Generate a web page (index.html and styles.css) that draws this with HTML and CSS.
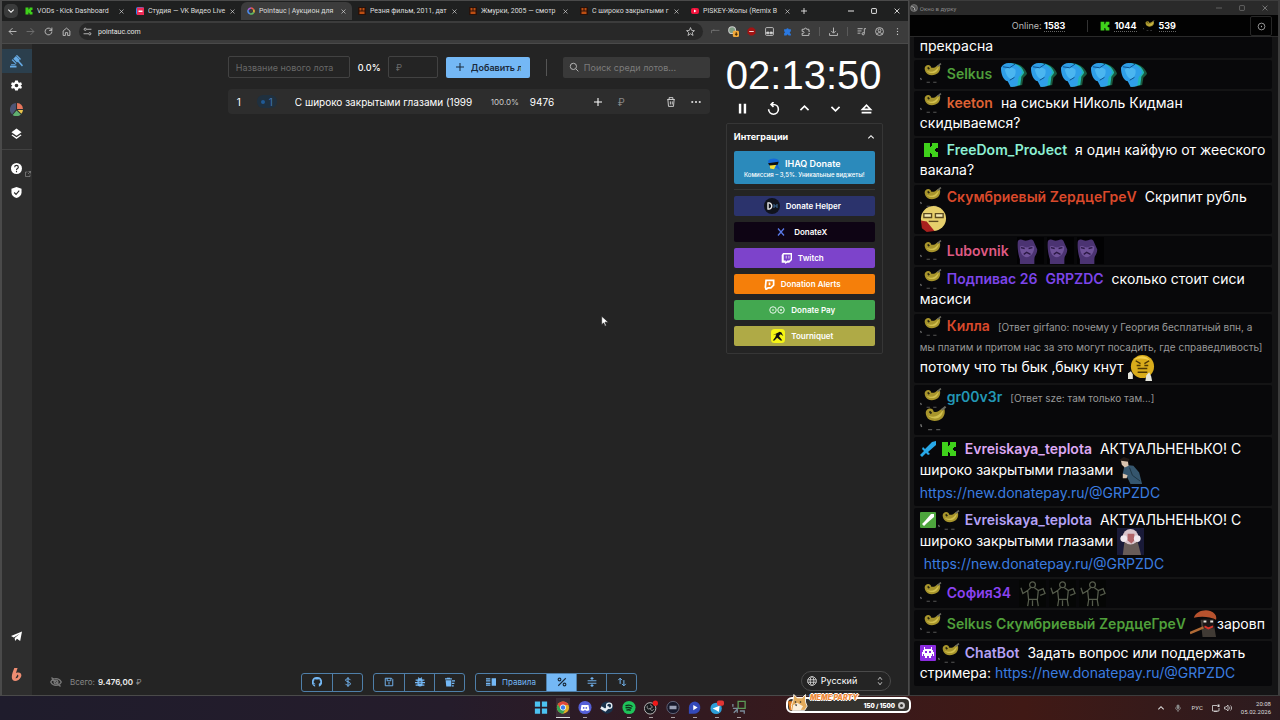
FILE: index.html
```
<!DOCTYPE html>
<html lang="ru">
<head>
    <meta charset="UTF-8">
    <meta name="viewport" content="width=device-width, initial-scale=1.0">
    <title>Pointauc | Аукцион для стримеров</title>
    <link rel="stylesheet" href="styles.css">
</head>
<body>

<!-- Общие иконки -->
<svg class="sprite" aria-hidden="true">
    <symbol id="kick" viewBox="0 0 16 16"><path fill="#3fd11b" d="M1 1h6v4h1V4h1V1h6v5h-2v1h-1v2h1v1h2v5H9v-3H8v-1H7v4H1z"/></symbol>
    <symbol id="banana" viewBox="0 0 20 20">
        <path fill="#a8952c" d="M5 3c2-2 5-1 5 1 2 1 4 0 6-2l2 0c1 3 0 7-4 8.500-4 1.500-8 0-9-2.500-1-2-1-4 0-5z"/>
        <path fill="#d2c04e" d="M6 7c4 2 8 1 11-4 0 4-3 7-7 6-2 0-3-1-4-2z"/>
        <path stroke="#2a2710" stroke-width="1.500" d="M7 4l1.500 1.500"/>
        <path stroke="#6b6b60" stroke-width="1.500" d="M16 3l3-2.500"/>
        <path stroke="#777" d="M.5 13.500l.7 2"/>
        <path stroke="#555" d="M6 17.500h3M12 17.500h3"/>
    </symbol>
    <symbol id="ice" viewBox="0 0 28 28">
        <path fill="#1b5a3f" d="M14 3c7 0 12 4 14 10-1 3-4 3-4 6l-1 6-9 2z"/>
        <path fill="#20b8b4" d="M10 2c8 0 13 4 15 10-1 3-3 3-3 6l-1 7-9 2z"/>
        <path fill="#2f9fe8" d="M1 7c2-5 8-6 13-4 5 1 8 5 9 9-1 3-4 4-4 7l-1 7-7 1-3-6c-5-1-7-8-7-14z"/>
        <path fill="#4bb6f0" d="M5 9c3-3 8-3 11 0 1 4-1 8-4 10-4-1-6-6-7-10z"/>
        <path fill="none" stroke="#0b4f8a" d="M3 6l7 1 6-4M10 20l5-3"/>
    </symbol>
    <symbol id="cat" viewBox="0 0 28 28">
        <path fill="#020203" d="M0 0h28v28H0z"/>
        <path fill="#4b3372" d="M1 4c3-3 6 0 8 0s6-3 8 0l4 9c0 5-3 6-3 10v5H3v-5C1 18 0 8 1 4z"/>
        <path fill="#6f5299" d="M3 10c3-2 5 1 7 1s5-3 8-1c0 6-4 11-8 11S3 16 3 10z"/>
        <path fill="none" stroke="#2c1945" stroke-width="1.500" d="M4 11l4 1M16 11l-4 1M7 18l3-2 4 2"/>
    </symbol>
    <symbol id="dance" viewBox="0 0 28 28">
        <path fill="#050605" d="M0 0h28v28H0z"/>
        <g fill="none" stroke="#565c4c" stroke-width="1.300"><circle cx="14" cy="5" r="3"/><path d="M12 8l-3 3-5 3-2-6M16 8l4 3 5-2 2 5-5 2M9 11l1 10-1 6M20 11l-1 10 1 6M10 20h9M14 21v6"/></g>
    </symbol>
    <symbol id="doubt" viewBox="0 0 28 28">
        <circle cx="14" cy="14" r="13" fill="#e6cf6c"/>
        <path fill="#f3e9b0" stroke="#5b4a20" stroke-width="1.400" d="M4 9h8v4H4zM16 9h8v4h-8z"/>
        <path fill="none" stroke="#5b4a20" stroke-width="1.400" d="M9 17h10"/>
        <path fill="#a8201e" d="M1 16l6 1 8 10-8 1-5-4z"/>
    </symbol>
    <symbol id="angry" viewBox="0 0 28 28">
        <circle cx="15" cy="13" r="12" fill="#d9ac1b"/>
        <path fill="#f1cf4c" d="M6 6c5-5 13-5 17 1-6-3-12-3-17-1z"/>
        <path fill="none" stroke="#4e3804" stroke-width="1.500" d="M8 7l5 3M22 7l-5 3M9 12h4M17 12h4M10 19h10M10 15h10"/>
        <path fill="#e6e6dc" d="M0 20l3-2 2 3v5H0zM19 22l3-3 2 4 1 5h-7z"/>
    </symbol>
    <symbol id="suit" viewBox="0 0 28 28">
        <path fill="#35566e" d="M8 8l9 1 6 7 3 12H14l-4-8-4-3z"/>
        <path fill="#d8c3ae" d="M4 3l7-1 1 7-4 2-3-3zM6 17l5 2-1 3H6z"/>
        <path fill="#221a16" d="M2 3l5-3 6 2-1 3-8-1z"/>
        <path fill="none" stroke="#1c3342" d="M13 11l3 8 8 6"/>
    </symbol>
    <symbol id="monkey" viewBox="0 0 28 28">
        <path fill="#191a38" d="M0 0h28v28H0z"/>
        <path fill="#685c58" d="M8 12l13 1 4 15H6z"/>
        <circle cx="14" cy="9" r="8" fill="#d9c4cb"/>
        <path fill="#b06468" d="M11 6h7v7l-3 3-4-3z"/>
        <circle cx="7" cy="11" r="3.500" fill="#f1e9ef"/><circle cx="21" cy="11" r="3.500" fill="#f1e9ef"/>
    </symbol>
    <symbol id="mushroom" viewBox="0 0 28 28">
        <path fill="#403a34" d="M11 10h13l3 18H13z"/>
        <path fill="#b7522e" d="M4 8C6 2 14-1 21 1c5 2 7 5 6 9-6-3-15-4-23-2z"/>
        <path fill="#1c1717" d="M13 9h12v10H14z"/>
        <path stroke="#e8e4dc" stroke-width="2" d="M14 12h3M21 12h3"/>
        <path fill="none" stroke="#d7342b" stroke-width="2" d="M15 17l4 2 5-2"/>
        <path stroke="#b06a35" stroke-width="2.500" d="M0 24l14-6"/>
    </symbol>
    <symbol id="film" viewBox="0 0 16 16"><path fill="#28120a" d="M0 0h16v16H0z"/><path fill="#bd4e12" d="M3 2h4v5H3zM9 2h4v5H9zM3 9h10v5H3z"/></symbol>
    <symbol id="x" viewBox="0 0 10 10"><path fill="none" stroke="currentColor" stroke-width="1.300" d="M1 1l8 8M9 1l-8 8"/></symbol>
    <symbol id="plus" viewBox="0 0 10 10"><path fill="none" stroke="currentColor" stroke-width="1.300" d="M5 0v10M0 5h10"/></symbol>
    <symbol id="up" viewBox="0 0 12 12"><path fill="none" stroke="currentColor" stroke-width="1.600" d="M2 8l4-4 4 4"/></symbol>
    <symbol id="down" viewBox="0 0 12 12"><path fill="none" stroke="currentColor" stroke-width="1.600" d="M2 4l4 4 4-4"/></symbol>
</svg>

<div class="windows">

    <!-- Окно браузера -->
    <section class="browser">
        <div class="tabs">
            <button class="tab-search" aria-label="Поиск вкладок"><svg class="i8"><use href="#down"/></svg></button>
            <div class="tab"><svg class="fav"><use href="#kick"/></svg><span>VODs - Kick Dashboard</span><svg class="close"><use href="#x"/></svg></div>
            <div class="tab"><svg class="fav" viewBox="0 0 16 16"><rect width="16" height="16" rx="4" fill="#2786f5"/><path fill="#ef2b56" d="M2 1h14v15H2z"/><path fill="#fff" d="M5 7h8v3H5z"/></svg><span>Студия — VK Видео Live</span><svg class="close"><use href="#x"/></svg></div>
            <div class="tab active"><svg class="fav" viewBox="0 0 16 16" fill="none" stroke-width="3"><path stroke="#ef5a4c" d="M8 2a6 6 0 0 1 5.200 3"/><path stroke="#f0c33a" d="M13.200 5a6 6 0 0 1 0 6"/><path stroke="#5dbb63" d="M13.200 11A6 6 0 0 1 6 13.600"/><path stroke="#4d8df0" d="M6 13.600A6 6 0 0 1 2.400 6"/><path stroke="#a95fd8" d="M2.400 6A6 6 0 0 1 8 2"/></svg><span>Pointauc | Аукцион для</span><svg class="close"><use href="#x"/></svg></div>
            <div class="tab"><svg class="fav"><use href="#film"/></svg><span>Резня фильм, 2011, дат</span><svg class="close"><use href="#x"/></svg></div>
            <div class="tab"><svg class="fav"><use href="#film"/></svg><span>Жмурки, 2005 — смотр</span><svg class="close"><use href="#x"/></svg></div>
            <div class="tab"><svg class="fav"><use href="#film"/></svg><span>С широко закрытыми г</span><svg class="close"><use href="#x"/></svg></div>
            <div class="tab"><svg class="fav" viewBox="0 0 16 16"><rect y="2" width="16" height="12" rx="4" fill="#f0133c"/><path fill="#fff" d="M6 5l5 3-5 3z"/></svg><span>PISKEY-Жопы (Remix B</span><svg class="close"><use href="#x"/></svg></div>
            <button class="new-tab" aria-label="Новая вкладка"><svg class="i6"><use href="#plus"/></svg></button>
            <div class="win-buttons">
                <svg class="i6" viewBox="0 0 10 10"><path stroke="currentColor" stroke-width="1.500" d="M0 5h10"/></svg>
                <svg class="i6" viewBox="0 0 10 10"><rect x="1" y="1" width="8" height="8" rx="1" fill="none" stroke="currentColor" stroke-width="1.500"/></svg>
                <svg class="i6"><use href="#x"/></svg>
            </div>
        </div>

        <div class="toolbar">
            <div class="nav">
                <svg viewBox="0 0 16 16"><path d="M15 8H2M8 2L2 8l6 6"/></svg>
                <svg class="off" viewBox="0 0 16 16"><path d="M1 8h13M8 2l6 6-6 6"/></svg>
                <svg viewBox="0 0 16 16"><path d="M14 8a6 6 0 1 1-2-4.500L14 6M14 1v5H9"/></svg>
                <svg viewBox="0 0 16 16"><path d="M2 7l6-5 6 5v8h-4v-5H6v5H2z"/></svg>
            </div>
            <div class="address">
                <svg class="site" viewBox="0 0 16 16"><circle cx="4" cy="4" r="2"/><path d="M7 4h8M1 12h8"/><circle cx="12" cy="12" r="2"/></svg>
                <input type="text" aria-label="Адрес" value="pointauc.com">
                <svg class="star" viewBox="0 0 16 16"><path d="M8 1l2 5 5 .5-4 3.500 1.500 5L8 12l-4.500 3L5 10 1 6.500 6 6z"/></svg>
            </div>
            <div class="ext">
                <svg class="off" viewBox="0 0 16 16"><path d="M1 6h14M1 6v5M5 4v3"/></svg>
                <svg class="big" viewBox="0 0 16 16"><circle cx="6" cy="6" r="5" fill="#7f9c83"/><rect x="7" y="7" width="9" height="9" rx="2" fill="#f2a93a" stroke="none"/><path stroke="#402800" d="M12 9v5M10 12h4"/></svg>
                <svg viewBox="0 0 16 16"><path fill="#a11313" stroke="none" d="M5 1h6l4 4v6l-4 4H5l-4-4V5z"/><path stroke="#fff" d="M4 8h8"/></svg>
                <svg viewBox="0 0 16 16"><rect x="1" y="1" width="14" height="14" rx="2"/><path fill="#ddd" d="M3 9h4v3H3zM9 9h4v3H9z"/></svg>
                <svg viewBox="0 0 16 16"><path fill="#2a78e0" stroke="none" d="M2 4h4a2 2 0 1 1 4 0h4v4a2 2 0 1 0 0 4v3h-4l-2-2-2 2H2v-4l2-2-2-1z"/></svg>
                <svg viewBox="0 0 16 16"><path d="M2 4h4a2 2 0 1 1 4 0h4v4a2 2 0 1 1 0 3v4H2v-4a2 2 0 1 0 0-3z"/></svg>
                <i></i>
                <svg viewBox="0 0 16 16"><path d="M8 1v9M4 7l4 4 4-4M1 11v4h14v-4"/></svg>
                <i></i>
                <svg viewBox="0 0 16 16"><path d="M1 3h9M1 7h7M1 11h5M13 3v8M13 3h3"/><circle cx="11" cy="12" r="2"/></svg>
                <svg viewBox="0 0 16 16"><circle cx="8" cy="8" r="7"/><circle cx="8" cy="6" r="2.500"/><path d="M3 13c2-4 8-4 10 0"/></svg>
                <svg viewBox="0 0 16 16"><path stroke-width="2" d="M8 2v2M8 7v2M8 12v2"/></svg>
            </div>
        </div>

        <div class="page">
            <nav class="sidebar">
                <a href="#" class="current" aria-label="Аукцион"><svg viewBox="0 0 24 24" fill="#67ace6"><path d="M0 20h12v3H0zM2 17h8v2H2z"/><path d="M11 1l2-1 7 7-1 2zM3 9l2-1 7 7-1 2zM6 7l5-5 7 7-5 5z"/><path d="M14 12l2-2 8 9-2 2z"/></svg></a>
                <a href="#" aria-label="Настройки"><svg viewBox="0 0 24 24" fill="#fff"><path fill-rule="evenodd" d="M9 1h6l1 4 2 1 4-1 2 5-3 2 3 3-2 4-4-1-2 1-1 4H9l-1-4-2-1-4 1-2-4 3-3-3-2 2-5 4 1 2-1zM12 8a4 4 0 1 0 0 8 4 4 0 0 0 0-8z"/></svg></a>
                <a href="#" aria-label="Колесо"><svg class="wide" viewBox="0 0 24 24"><path fill="#e8765c" d="M13 0a12 12 0 0 1 11 11H13z"/><path fill="#e8c34b" d="M14 13h10a12 12 0 0 1-3 7z"/><path fill="#5fae70" d="M12 14l8 7a12 12 0 0 1-15 1z"/><path fill="#4c5576" d="M11 0v12l-7 9A12 12 0 0 1 11 0z"/></svg></a>
                <a href="#" aria-label="Слои"><svg viewBox="0 0 24 24" fill="#fff"><path d="M12 1l11 8-11 8L1 9z"/><path d="M3 14l9 6 9-6 2 2-11 8L1 16z"/></svg></a>
                <hr>
                <a href="#" aria-label="Помощь"><svg viewBox="0 0 24 24"><circle cx="12" cy="12" r="12" fill="#fff"/><path fill="none" stroke="#2b2b2b" stroke-width="2.500" d="M8 9c0-5 8-5 8 0 0 3-4 3-4 6M12 17v3"/></svg>
                    <svg class="external" viewBox="0 0 12 12"><path fill="none" stroke="#aaa" d="M5 2H1v9h9V7M7 1h4v4M11 1L6 6"/></svg></a>
                <a href="#" aria-label="Политика"><svg viewBox="0 0 24 24"><path fill="#fff" d="M12 0l11 4v8c0 6-5 10-11 12C6 22 1 18 1 12V4z"/><path fill="none" stroke="#2b2b2b" stroke-width="2.500" d="M7 12l4 4 7-8"/></svg></a>
                <a href="#" class="bottom" aria-label="Telegram"><svg viewBox="0 0 24 24" fill="#fff"><path d="M0 11L24 1l-4 21-7-5-4 5-1-7L19 6 6 14z"/></svg></a>
                <a href="#" aria-label="Boosty"><svg class="wide" viewBox="0 0 24 24" fill="#ee8d72"><path fill-rule="evenodd" d="M8 0h6l-3 9c8-3 12 2 9 8-3 6-11 9-15 5-4-5 0-14 3-22zM14 12l-4 7c5 1 7-6 4-7z"/></svg></a>
            </nav>

            <main class="main">
                <div class="work">
                    <div class="lots">
                        <form class="new-lot">
                            <input class="lot-name" type="text" placeholder="Название нового лота" aria-label="Название нового лота">
                            <b>0.0%</b>
                            <input class="lot-sum" type="text" placeholder="₽" aria-label="Сумма">
                            <button type="button" class="add"><svg class="i8"><use href="#plus"/></svg><span>Добавить ло</span></button>
                            <i class="divider"></i>
                            <label class="search">
                                <svg viewBox="0 0 16 16"><circle cx="7" cy="7" r="5" fill="none" stroke="#bbb" stroke-width="1.500"/><path stroke="#bbb" stroke-width="1.500" d="M11 11l4 4"/></svg>
                                <input type="search" placeholder="Поиск среди лотов..." aria-label="Поиск среди лотов">
                            </label>
                        </form>
                        <div class="lot">
                            <span class="num">1</span>
                            <span class="badge"><i></i>1</span>
                            <span class="title">С широко закрытыми глазами (1999</span>
                            <span class="percent">100.0%</span>
                            <span class="sum">9476</span>
                            <svg class="i8"><use href="#plus"/></svg>
                            <span class="rub">₽</span>
                            <svg class="trash" viewBox="0 0 16 16" fill="none" stroke="#ddd" stroke-width="1.400"><path d="M2 4h12M5 4V1h6v3M3 4l1 11h8l1-11M7 7v5M10 7v5"/></svg>
                            <svg class="dots" viewBox="0 0 16 16" fill="#ddd"><circle cx="2" cy="8" r="1.700"/><circle cx="8" cy="8" r="1.700"/><circle cx="14" cy="8" r="1.700"/></svg>
                        </div>
                    </div>

                    <aside class="side">
                        <div class="timer">02:13:50</div>
                        <div class="controls">
                            <button aria-label="Пауза"><svg viewBox="0 0 16 16"><path stroke-width="3" d="M5 2v12M11 2v12"/></svg></button>
                            <button aria-label="Сбросить"><svg viewBox="0 0 16 16"><path d="M2 9a6 6 0 1 0 6-6H5M8 0L5 3l3 3"/></svg></button>
                            <button aria-label="Больше"><svg viewBox="0 0 16 16"><path d="M3 10l5-5 5 5"/></svg></button>
                            <button aria-label="Меньше"><svg viewBox="0 0 16 16"><path d="M3 6l5 5 5-5"/></svg></button>
                            <button aria-label="Максимум"><svg viewBox="0 0 16 16"><path d="M3 9l5-5 5 5zM2 13h12"/></svg></button>
                        </div>
                        <div class="integrations">
                            <h2>Интеграции <svg class="i8"><use href="#up"/></svg></h2>
                            <button class="ihaq"><span><svg viewBox="0 0 16 16"><path fill="#1468d8" d="M0 4c4-5 14-4 15 1l-2 4 3 7-5-3-9-2z"/><path fill="#f5df3a" d="M2 9h9l-3 6-5-1z"/><path fill="#111" d="M0 7l14-2-1 4-11 1z"/></svg>IHAQ Donate</span><small>Комиссия – 3,5%. Уникальные виджеты!</small></button>
                            <hr>
                            <button class="helper"><svg class="logo16" viewBox="0 0 16 16"><circle cx="8" cy="8" r="8" fill="#10131c"/><path fill="none" stroke="#eee" stroke-width="1.400" d="M4 5v6c5 1 5-7 0-6z"/><path stroke="#3f6f9a" d="M10 6v4M13 6v4M10 8h3"/></svg>Donate Helper</button>
                            <button class="donatex"><svg class="logo8" viewBox="0 0 16 16"><path fill="none" stroke="#5b7bea" stroke-width="2.500" d="M2 1l12 14M14 1L2 15"/></svg>DonateX</button>
                            <button class="twitch"><svg class="logo10" viewBox="0 0 16 16"><path fill="#fff" fill-rule="evenodd" d="M3 0h13v10l-4 4H9l-3 2v-2H1V3zM4 2v9h3v2l2-2h3l2-2V2zM7 4h1v4H7zM11 4h1v4h-1z"/></svg>Twitch</button>
                            <button class="alerts"><svg class="logo10" viewBox="0 0 16 16"><path fill="none" stroke="#fff" stroke-width="2.500" d="M3 2h11v7l-4 4H6l-3 2-1-3zM8 5v4"/></svg>Donation Alerts</button>
                            <button class="pay"><svg class="logo-wide" viewBox="0 0 32 16"><g fill="none" stroke="#e9f7eb" stroke-width="2"><circle cx="8" cy="8" r="6.500"/><circle cx="24" cy="8" r="6.500"/><path d="M6 8h4M22 8h4M24 6v4"/></g></svg>Donate Pay</button>
                            <button class="tourniquet"><svg class="logo14" viewBox="0 0 16 16"><rect width="16" height="16" rx="4" fill="#f5f514"/><path fill="#111" d="M2 7l4-2 4-2 2 1 2 4-3-2-2 2 4 5h-2l-4-3-3 3H2l3-4 1-3z"/></svg>Tourniquet</button>
                        </div>
                    </aside>
                </div>

                <footer class="footer">
                    <div class="total">
                        <svg viewBox="0 0 16 16" fill="none" stroke="#777" stroke-width="1.800"><path d="M1 8c3-6 11-6 14 0-3 6-11 6-14 0zM2 2l12 12"/><circle cx="8" cy="8" r="2.500"/></svg>
                        Всего: <b>9.476,00</b> ₽
                    </div>
                    <div class="groups">
                        <div class="group">
                            <button aria-label="GitHub"><svg viewBox="0 0 16 16"><path fill="currentColor" d="M8 0a8 8 0 0 0-3 15.500V13c-2 0-2-2-3-2 1-1 2 1 3 1l.5-1C2 10 2 6 4 5V3l2 1h4l2-1v2c2 1 2 5-1.500 6l.5 1v3.500A8 8 0 0 0 8 0z"/></svg></button>
                            <button aria-label="Донат"><svg viewBox="0 0 16 16"><path fill="none" stroke="currentColor" stroke-width="1.500" d="M12 5c-1-3-8-3-8 0s8 2 8 6c0 3-7 3-8 0M8 0v16"/></svg></button>
                        </div>
                        <div class="group">
                            <button aria-label="Сохранить"><svg viewBox="0 0 16 16"><path fill="none" stroke="currentColor" stroke-width="1.500" d="M2 2h10l2 2v10H2zM5 2v4h6V2M8 8v4"/></svg></button>
                            <button aria-label="Ошибка"><svg viewBox="0 0 16 16"><path stroke="currentColor" stroke-width="2" d="M1 5h14M0 9h16M1 13h14M5 1l2 2M11 1L9 3"/><rect x="4" y="2" width="8" height="13" rx="4" fill="currentColor"/><path stroke="#242424" d="M6 7h4M6 10h4"/></svg></button>
                            <button aria-label="Очистить"><svg viewBox="0 0 16 16"><path fill="currentColor" d="M1 5h9v10H2zM0 2h3V1h5v1h3v2H0zM11 5h5v2h-5zM11 9h4v2h-4zM11 13h3v2h-3z"/></svg></button>
                        </div>
                        <div class="group">
                            <button class="rules"><svg viewBox="0 0 16 16"><path fill="currentColor" d="M9 2h7v12H9zM0 2h7v2H0zM0 5h7v2H0zM0 9h7v2H0zM0 12h7v2H0z"/></svg>Правила</button>
                            <button class="on" aria-label="Проценты"><svg viewBox="0 0 16 16" fill="none" stroke="currentColor" stroke-width="1.800"><path d="M14 2L2 14"/><circle cx="4" cy="4" r="2.200"/><circle cx="12" cy="12" r="2.200"/></svg></button>
                            <button aria-label="Сжать"><svg viewBox="0 0 16 16"><path stroke="currentColor" stroke-width="1.500" fill="currentColor" d="M1 6h14M1 10h14M8 0v3M6 2h4L8 4zM8 16v-3M6 14h4l-2-2z"/></svg></button>
                            <button aria-label="Сортировка"><svg viewBox="0 0 16 16"><path fill="none" stroke="currentColor" stroke-width="1.600" d="M5 11V2M2 5l3-3 3 3M11 5v9M8 11l3 3 3-3"/></svg></button>
                        </div>
                    </div>
                    <button class="lang">
                        <svg viewBox="0 0 16 16" fill="none" stroke="#ddd" stroke-width="1.300"><circle cx="8" cy="8" r="7"/><ellipse cx="8" cy="8" rx="3" ry="7"/><path d="M1 6h14M1 10h14"/></svg>
                        <span>Русский</span>
                        <svg viewBox="0 0 16 16" fill="none" stroke="#ccc" stroke-width="1.500"><path d="M5 6l3-4 3 4M5 10l3 4 3-4"/></svg>
                    </button>
                </footer>
            </main>
        </div>

        <svg class="cursor" viewBox="0 0 12 18"><path fill="#fff" stroke="#222" d="M1 1v13l3-3 2 5 2-1-2-5h5z"/></svg>
    </section>

    <!-- Окно чата -->
    <section class="chat">
        <div class="chat-title">
            <svg class="i8" viewBox="0 0 16 16"><circle cx="8" cy="8" r="7" fill="#555" stroke="#999"/><path stroke="#bbb" stroke-width="2" d="M3 5l5 2 2 6"/></svg>
            <span>Окно в дурку</span>
            <div class="win-buttons">
                <svg class="i6" viewBox="0 0 10 10"><path stroke="currentColor" d="M0 5h10"/></svg>
                <svg class="i6" viewBox="0 0 10 10"><rect x="1" y="1" width="8" height="8" rx="1" fill="none" stroke="currentColor"/></svg>
                <svg class="i6"><use href="#x"/></svg>
            </div>
        </div>
        <div class="chat-head">
            <div class="online">Online: <b>1583</b></div>
            <div class="platforms">
                <svg class="p10"><use href="#kick"/></svg><b>1044</b>
                <svg class="p12"><use href="#banana"/></svg><b>539</b>
            </div>
            <button class="gear" aria-label="Настройки"><svg viewBox="0 0 16 16" fill="none" stroke="#aaa" stroke-width="1.500"><circle cx="8" cy="8" r="6"/><path stroke-width="2.500" d="M7 8h2"/></svg></button>
        </div>

        <div class="messages">
            <p class="first">прекрасна</p>
            <p class="one"><svg class="badge20"><use href="#banana"/></svg><b class="c-green">Selkus</b><span class="emotes"><svg><use href="#ice"/></svg><svg><use href="#ice"/></svg><svg><use href="#ice"/></svg><svg><use href="#ice"/></svg><svg><use href="#ice"/></svg></span></p>
            <p><svg class="badge20"><use href="#banana"/></svg><b class="c-orange">keeton</b>на сиськи НИколь Кидман скидываемся?</p>
            <p><svg class="badge16"><use href="#kick"/></svg><b class="c-mint">FreeDom_ProJect</b>я один кайфую от жееского вакала?</p>
            <p><svg class="badge20"><use href="#banana"/></svg><b class="c-red">Скумбриевый ZердцеГреV</b>Скрипит рубль <svg class="emote"><use href="#doubt"/></svg></p>
            <p class="one"><svg class="badge20"><use href="#banana"/></svg><b class="c-pink">Lubovnik</b><span class="emotes"><svg><use href="#cat"/></svg><svg><use href="#cat"/></svg><svg><use href="#cat"/></svg></span></p>
            <p><svg class="badge20"><use href="#banana"/></svg><b class="c-violet">Подпивас 26</b><b class="c-violet">GRPZDC</b>сколько стоит сиси масиси</p>
            <p><svg class="badge20"><use href="#banana"/></svg><b class="c-red">Килла</b><small>[Ответ girfano: почему у Георгия бесплатный впн, а мы платим и притом нас за это могут посадить, где справедливость]</small><br>потому что ты бык ,быку кнут <svg class="emote"><use href="#angry"/></svg></p>
            <p><svg class="badge20"><use href="#banana"/></svg><b class="c-cyan">gr00v3r</b><small>[Ответ sze: там только там...]</small><br><svg class="emote"><use href="#banana"/></svg></p>
            <p><svg class="badge16 square" viewBox="0 0 16 16"><path fill="#28a9e8" d="M16 0v4L8 11l2 2-2 1-2-2-4 4-2-2 4-4-2-2 1-2 2 2 7-7z"/></svg><svg class="badge16"><use href="#kick"/></svg><b class="c-rose">Evreiskaya_teplota</b>АКТУАЛЬНЕНЬКО! С широко закрытыми глазами <svg class="emote"><use href="#suit"/></svg><br><a href="#">https://new.donatepay.ru/@GRPZDC</a></p>
            <p><svg class="badge16 square" viewBox="0 0 16 16"><rect width="16" height="16" rx="1" fill="#4da53d"/><path fill="#fff" d="M14 2v3L7 11l-3 3-2-2 3-3 6-7z"/></svg><svg class="badge20"><use href="#banana"/></svg><b class="c-lilac">Evreiskaya_teplota</b>АКТУАЛЬНЕНЬКО! С широко закрытыми глазами <svg class="emote"><use href="#monkey"/></svg><br><a href="#" class="indent">https://new.donatepay.ru/@GRPZDC</a></p>
            <p class="one"><svg class="badge20"><use href="#banana"/></svg><b class="c-purple">София34</b><span class="emotes"><svg><use href="#dance"/></svg><svg><use href="#dance"/></svg><svg><use href="#dance"/></svg></span></p>
            <p class="one"><svg class="badge20"><use href="#banana"/></svg><b class="c-green last">Selkus</b><b class="c-green last">Скумбриевый ZердцеГреV</b><svg class="emote"><use href="#mushroom"/></svg>заровп</p>
            <p><svg class="badge16 square" viewBox="0 0 16 16"><rect width="16" height="16" rx="1" fill="#8b2be0"/><path fill="#fff" fill-rule="evenodd" d="M4 2h1v2h6V2h1v3h1v2h1v4h-1v-2h-1v2h-1v2H9v-2H7v2H5v-2H4V9H3v2H2V7h1V5h1zM5 6v2h2V6zM9 6v2h2V6z"/></svg><svg class="badge20"><use href="#banana"/></svg><b class="c-lilac">ChatBot</b>Задать вопрос или поддержать стримера: <a href="#">https://new.donatepay.ru/@GRPZDC</a></p>
        </div>
    </section>
</div>

<!-- Панель задач -->
<div class="taskbar">
    <div class="apps">
        <svg viewBox="0 0 16 16"><path fill="#4cc2f1" d="M1 1h6v6H1zM9 1h6v6H9zM1 9h6v6H1zM9 9h6v6H9z"/></svg>
        <svg class="focus" viewBox="0 0 16 16"><circle cx="8" cy="8" r="7" fill="#e2ad24"/><path fill="#e0483a" d="M2 4.500A7 7 0 0 1 14.300 5H8L5 9.500z"/><path fill="#33a455" d="M2 4.500A7 7 0 0 0 8 15l3-5.500H5z"/><circle cx="8" cy="8" r="3.300" fill="#fff"/><circle cx="8" cy="8" r="2.500" fill="#3b7ded"/></svg>
        <svg class="run" viewBox="0 0 16 16"><circle cx="8" cy="8" r="7.500" fill="#5560d8"/><path fill="#fff" d="M4 5h8l1 6-3 1-1-1H7l-1 1-3-1z"/><circle cx="6.500" cy="8.500" r="1" fill="#5560d8"/><circle cx="9.500" cy="8.500" r="1" fill="#5560d8"/></svg>
        <svg viewBox="0 0 16 16"><circle cx="8" cy="8" r="7" fill="#19324c"/><circle cx="10.500" cy="6" r="3" fill="none" stroke="#e6eef5" stroke-width="1.500"/><path fill="none" stroke="#e6eef5" stroke-width="3" d="M1 8l5 3 4-4"/></svg>
        <svg class="run" viewBox="0 0 16 16"><circle cx="8" cy="8" r="7.500" fill="#1fc35a"/><path fill="none" stroke="#10301c" stroke-width="1.600" d="M4 6c3-1 6-1 8 1M4 8.500c3-1 5-.5 7 .5M5 11c2-.5 4-.5 5 .5"/></svg>
        <svg class="run" viewBox="0 0 16 16"><circle cx="7" cy="9" r="6.500" fill="#17181c" stroke="#c9c9c9"/><path stroke="#aaa" fill="none" d="M7 5c3 1 3 4 0 4-3 2-4-1-3-3M7 9c1 3 3 3 4 1"/><circle cx="13" cy="3" r="3" fill="#f01818"/></svg>
        <svg class="run" viewBox="0 0 16 16"><circle cx="8" cy="8" r="7" fill="#17182a" stroke="#666a80"/><path fill="#9aa0b6" d="M4 6h8v4H4z"/></svg>
        <svg class="run" viewBox="0 0 16 16"><path fill="#3349b9" d="M8 1a7 7 0 1 1-2 14H1V8a7 7 0 0 1 7-7z"/><path fill="#fff" d="M6 5l5 3-5 3z"/></svg>
        <svg class="run" viewBox="0 0 16 16"><circle cx="7" cy="9" r="6.500" fill="#2d9fd8"/><path fill="#fff" d="M3 9l8-3-1 7-3-2z"/><rect x="8" width="8" height="6" rx="2" fill="#e33434"/></svg>
        <svg class="run" viewBox="0 0 16 16" fill="none" stroke-width="1.500"><path stroke="#5c9b57" d="M7 1h8v8H7z"/><path stroke="#7b8c9b" d="M1 4v3M1 9h5v5M2 14l4-4M9 12h5v3"/></svg>
    </div>
    <div class="tray">
        <svg class="i8"><use href="#up"/></svg>
        <svg class="i8" viewBox="0 0 16 16"><rect x="5" y="1" width="6" height="9" rx="3" fill="#888"/><path fill="none" stroke="#999" stroke-width="1.500" d="M3 7c0 7 10 7 10 0M8 12v4"/></svg>
        <span>РУС</span>
        <div class="devices">
            <svg class="i8" viewBox="0 0 16 16"><path fill="none" stroke="#ddd" stroke-width="1.600" d="M10 3H1v11h13V8M4 15h7"/><path fill="#ddd" d="M11 1h4v5h-4z"/></svg>
            <svg class="i8" viewBox="0 0 16 16"><path fill="none" stroke="#ddd" stroke-width="1.500" d="M1 6h3l4-4v12l-4-4H1zM10 5c2 2 2 4 0 6M13 3c3 3 3 7 0 10"/></svg>
        </div>
        <time>20:08<br>05.02.2026</time>
    </div>

    <div class="party">
        <svg class="doge" viewBox="0 0 24 20"><path fill="#e07c22" d="M0 9h7v11H2z"/><path fill="#e3ab5c" stroke="#fff" d="M6 8l1-7 4 4h6l4-4v9l2 5-3 5H5l-1-6z"/><path fill="#fbeeda" d="M6 14l5-3 7 4-3 5H6z"/><circle cx="9" cy="10" r="1" fill="#222"/><circle cx="15" cy="10" r="1" fill="#222"/><path fill="#222" d="M8 13h3l-1 2z"/></svg>
        <strong>MEME PARTY</strong>
        <span>150 / 1500</span>
        <i></i>
    </div>
</div>

</body>
</html>
```
FILE: styles.css
```
* {
    box-sizing: border-box;
}
body {
    margin: 0;
    height: 100vh;
    display: flex;
    flex-direction: column;
    overflow: hidden;
    background-color: #1f1b28;
    color: #fff;
    font-family: Inter, "Noto Sans", sans-serif;
    font-size: 10px;
}
button,
input {
    font: inherit;
    color: inherit;
    border: none;
    background: none;
    padding: 0;
    margin: 0;
    min-width: 0;
}
button {
    cursor: pointer;
}
svg {
    flex: none;
}
.sprite {
    display: none;
}
.i6 {
    width: 6px;
    height: 6px;
}
.i8 {
    width: 8px;
    height: 8px;
}
.windows {
    flex: 1;
    min-height: 0;
    display: grid;
    grid-template-columns: 71fr 29fr;
    grid-template-rows: 100%;
}

/* Браузер */
.browser {
    position: relative;
    min-width: 0;
    display: flex;
    flex-direction: column;
    border: 1px solid #4a4a4a;
    border-left-width: 2px;
    background-color: #3c3c3c;
    font-family: Roboto, "Noto Sans", sans-serif;
}
.tabs {
    display: flex;
    align-items: center;
    height: 20px;
    padding-left: 2px;
    background-color: #1f2020;
    font-size: 7px;
}
.tab-search {
    display: flex;
    align-items: center;
    justify-content: center;
    width: 14px;
    height: 14px;
    margin-right: 1px;
    border-radius: 5px;
    background-color: #3a3b3b;
}
.tab {
    display: flex;
    align-items: center;
    gap: 4px;
    flex: 0 1 111px;
    min-width: 0;
    height: 18px;
    padding: 0 6px;
    border-radius: 6px 6px 0 0;
    color: #ddd;
}
.tab.active {
    background-color: #3c3c3c;
}
.tab span {
    flex: 1;
    overflow: hidden;
    white-space: nowrap;
}
.tab .fav {
    width: 8px;
    height: 8px;
}
.tab .close {
    width: 5px;
    height: 5px;
}
.new-tab {
    display: flex;
    padding: 5px;
}
.win-buttons {
    display: flex;
    align-items: center;
    gap: 17px;
    margin-left: auto;
    padding-right: 8px;
}
.toolbar {
    display: flex;
    align-items: center;
    height: 23px;
    padding: 0 6px 1px 6px;
    border-bottom: 1px solid #4a4a4a;
    font-size: 7px;
}
.toolbar svg {
    width: 9px;
    height: 9px;
    fill: none;
    stroke: #ccc;
    stroke-width: 1.5;
}
.toolbar svg.big {
    width: 11px;
    height: 11px;
    margin: 0 -1px;
}
.toolbar svg.off {
    opacity: 0.4;
}
.nav {
    display: flex;
    gap: 9px;
}
.address {
    flex: 1;
    display: flex;
    align-items: center;
    gap: 6px;
    height: 17px;
    margin: 0 8px;
    padding: 0 8px 0 4px;
    border-radius: 9px;
    background-color: #282828;
    color: #e4e4e4;
}
.address input {
    flex: 1;
}
.ext {
    display: flex;
    align-items: center;
    gap: 9px;
}
.ext i {
    width: 1px;
    height: 9px;
    background-color: #5a5a5a;
}

/* Страница аукциона */
.page {
    flex: 1;
    min-height: 0;
    display: flex;
    background-color: #242424;
    font-family: Inter, "Noto Sans", sans-serif;
}
.sidebar {
    display: flex;
    flex-direction: column;
    width: 30px;
    padding: 5px 0 9px;
    background-color: #2e2e2e;
}
.sidebar a {
    position: relative;
    display: flex;
    align-items: center;
    justify-content: center;
    height: 24px;
    padding-right: 2px;
}
.sidebar a svg {
    width: 11px;
    height: 11px;
}
.sidebar a svg.wide,
.sidebar .current svg {
    width: 13px;
    height: 13px;
}
.sidebar .current {
    background-color: #2b3f4d;
}
.sidebar a .external {
    position: absolute;
    right: 1px;
    bottom: 3px;
    width: 6px;
    height: 6px;
}
.sidebar hr {
    width: 100%;
    margin: 4px 0 6px;
    border: none;
    border-top: 1px solid #424242;
}
.sidebar .bottom {
    margin: auto 0 14px;
}
.main {
    flex: 1;
    min-width: 0;
    display: flex;
    flex-direction: column;
}
.work {
    flex: 1;
    display: flex;
    justify-content: flex-end;
    gap: 16px;
    padding: 12px 25px 0 0;
}
.lots {
    width: 482px;
}
.new-lot {
    display: flex;
    align-items: center;
    gap: 8px;
    height: 22px;
    font-size: 9px;
}
.new-lot b {
    flex: none;
    width: 22px;
    font-weight: 500;
    white-space: nowrap;
}
.lot-name,
.lot-sum {
    flex: none;
    height: 22px;
    padding: 0 7px;
    border: 1px solid #424242;
    border-radius: 2px;
}
.lot-name {
    width: 122px;
}
.lot-sum {
    width: 50px;
}
.new-lot input::placeholder {
    color: #696969;
    opacity: 1;
}
.add {
    flex: none;
    display: flex;
    align-items: center;
    gap: 7px;
    width: 84px;
    height: 21px;
    padding: 0 9px 0 10px;
    border-radius: 2px;
    background-color: #74b8f5;
    color: #1a2b3c;
    font-weight: 600;
}
.add span {
    overflow: hidden;
    white-space: nowrap;
}
.divider {
    flex: none;
    width: 1px;
    height: 17px;
    margin: 0 8px;
    background-color: #555;
}
.search {
    flex: 1;
    min-width: 0;
    display: flex;
    align-items: center;
    gap: 5px;
    height: 21px;
    padding: 0 6px;
    border-radius: 2px;
    background-color: #393939;
}
.search svg {
    width: 10px;
    height: 10px;
}
.search input {
    flex: 1;
}
.search input::placeholder {
    color: #7c7c7c;
}
.lot {
    display: grid;
    grid-template-columns: 20px 38px 196px 39px 64px 24px 48px 25px 10px;
    align-items: center;
    height: 25px;
    margin-top: 11px;
    padding-left: 9px;
    border-radius: 4px;
    background-color: #2d2d2d;
    font-size: 10px;
}
.lot .badge {
    display: flex;
    align-items: center;
    justify-content: center;
    gap: 4px;
    width: 20px;
    height: 13px;
    border-radius: 6px;
    background-color: #1f303f;
    color: #3f74b4;
}
.lot .badge i {
    width: 4px;
    height: 4px;
    border-radius: 50%;
    background-color: #205a96;
}
.lot .title {
    overflow: hidden;
    white-space: nowrap;
}
.lot .percent {
    font-size: 8px;
    color: #ccc;
}
.lot .rub {
    color: #888;
}
.trash,
.dots {
    width: 10px;
    height: 10px;
}
.side {
    width: 157px;
}
.timer {
    height: 42px;
    margin-top: -2px;
    line-height: 42px;
    font-family: "Liberation Sans", Arial, sans-serif;
    font-size: 40px;
}
.controls {
    display: flex;
    justify-content: space-between;
    padding: 6px 10px 8px;
}
.controls svg {
    display: block;
    width: 13px;
    height: 13px;
    fill: none;
    stroke: #fff;
    stroke-width: 2;
}
.integrations {
    display: flex;
    flex-direction: column;
    gap: 6px;
    padding: 4px 7px 7px;
    border: 1px solid #363636;
    border-radius: 2px;
}
.integrations h2 {
    display: flex;
    align-items: center;
    justify-content: space-between;
    height: 17px;
    margin: 0;
    font-size: 9px;
    font-weight: 700;
}
.integrations button {
    display: flex;
    align-items: center;
    justify-content: center;
    gap: 6px;
    height: 20px;
    padding-right: 4px;
    border-radius: 2px;
    font-size: 8px;
    font-weight: 600;
}
.integrations hr {
    width: 100%;
    margin: -1px 0 0;
    border: none;
    border-top: 1px solid #363636;
}
.integrations .ihaq {
    flex-direction: column;
    gap: 1px;
    height: 33px;
    padding: 0;
    background-color: #2b8abb;
    font-size: 9px;
}
.ihaq span {
    display: flex;
    align-items: center;
    gap: 5px;
}
.ihaq svg {
    width: 12px;
    height: 12px;
}
.ihaq small {
    font-size: 6px;
    font-weight: 500;
}
.integrations .helper {
    background-color: #2b336c;
}
.integrations .donatex {
    gap: 9px;
    background-color: #0e0414;
}
.integrations .twitch {
    background-color: #7d43cb;
}
.integrations .alerts {
    background-color: #f57f0a;
}
.integrations .pay {
    background-color: #43a850;
}
.integrations .tourniquet {
    background-color: #afaa46;
}
.logo16 {
    width: 16px;
    height: 16px;
}
.logo8 {
    width: 8px;
    height: 8px;
}
.logo10 {
    width: 11px;
    height: 11px;
}
.logo-wide {
    width: 16px;
    height: 8px;
}
.logo14 {
    width: 14px;
    height: 14px;
}
.footer {
    display: flex;
    align-items: center;
    height: 26px;
    padding: 0 17px 0 18px;
}
.footer svg {
    width: 10px;
    height: 10px;
}
.total {
    display: flex;
    align-items: center;
    gap: 3px;
    width: 251px;
    font-size: 8px;
    color: #888;
}
.total svg {
    width: 12px;
    height: 12px;
    margin-right: 5px;
}
.total b {
    color: #eee;
    font-weight: 600;
}
.groups {
    display: flex;
    gap: 10px;
}
.group {
    display: flex;
    border: 1px solid #4f7fa9;
    border-radius: 3px;
    color: #74b8f5;
}
.group button {
    display: flex;
    align-items: center;
    justify-content: center;
    gap: 6px;
    width: 30px;
    height: 17px;
    font-size: 8px;
}
.group button + button {
    border-left: 1px solid #4f7fa9;
}
.group .rules {
    width: 70px;
}
.group .on {
    background-color: #74b8f5;
    color: #1a2b3c;
}
.lang {
    display: flex;
    align-items: center;
    gap: 4px;
    width: 90px;
    height: 20px;
    margin: 0 0 3px auto;
    padding: 0 5px;
    border: 1px solid #4a4a4a;
    border-radius: 10px;
}
.lang span {
    flex: 1;
    text-align: left;
    font-size: 9px;
}
.cursor {
    position: absolute;
    left: 599px;
    top: 314px;
    width: 8px;
    height: 13px;
}

/* Чат */
.chat {
    min-width: 0;
    display: flex;
    flex-direction: column;
    border: 1px solid #3c3c3c;
    border-right-width: 2px;
    background-color: #141415;
}
.chat-title {
    flex: none;
    display: flex;
    align-items: center;
    gap: 2px;
    height: 14px;
    padding: 0 2px 0 0;
    background-color: #2a2a2a;
    color: #888;
    font-family: Roboto, "Noto Sans", sans-serif;
    font-size: 6px;
}
.chat-head {
    flex: none;
    position: relative;
    display: flex;
    justify-content: center;
    align-items: center;
    height: 22px;
    border-bottom: 1px solid #2a2a2a;
    background-color: #020202;
    color: #bbb;
    font-size: 9px;
}
.chat-head b {
    color: #fff;
    border-bottom: 1px dotted #666;
}
.online {
    margin-right: 22px;
}
.platforms {
    display: flex;
    align-items: center;
    gap: 4px;
    padding-left: 12px;
    border-left: 1px solid #333;
}
.p10 {
    width: 10px;
    height: 10px;
}
.p12 {
    width: 12px;
    height: 12px;
    margin-left: 2px;
}
.gear {
    position: absolute;
    right: 6px;
    top: 1px;
    display: flex;
    align-items: center;
    justify-content: center;
    width: 22px;
    height: 20px;
    border: 1px solid #262626;
    border-radius: 2px;
}
.gear svg {
    width: 9px;
    height: 9px;
}
.messages {
    flex: 1;
    min-height: 0;
    overflow: hidden;
    display: flex;
    flex-direction: column;
    justify-content: flex-end;
    gap: 2px;
    padding: 0 6px 9px 4px;
    font-size: 14px;
    line-height: 20px;
}
.messages p {
    flex: none;
    margin: 0;
    padding: 2px 6px 3px;
    border-radius: 2px;
    background-color: #08080a;
}
.messages .first {
    padding: 0 6px 2px;
}
.messages .one {
    display: flex;
    align-items: center;
    height: 29px;
    padding: 0 6px;
    white-space: nowrap;
}
.messages b {
    margin-right: 8px;
    font-weight: 600;
}
.messages b.last {
    margin-right: 4px;
}
.messages small {
    font-size: 10px;
    line-height: 12px;
    color: #999;
}
.messages a {
    color: #3b7de0;
    text-decoration: none;
}
.messages a.indent {
    margin-left: 4px;
}
.badge20 {
    width: 22px;
    height: 22px;
    margin: -2px 5px -2px 0;
    vertical-align: middle;
}
.badge16 {
    width: 16px;
    height: 16px;
    margin: 0 8px 0 3px;
    vertical-align: -3px;
}
.badge16.square {
    margin: 0 2px 0 0;
}
.emote {
    width: 27px;
    height: 27px;
    margin: -2px 0 -1px;
    vertical-align: middle;
}
.emotes {
    display: flex;
    gap: 3px;
}
.emotes svg {
    width: 27px;
    height: 27px;
}
.c-green { color: #4f9f3a; }
.c-orange { color: #df6234; }
.c-mint { color: #8df0d4; }
.c-red { color: #d9492b; }
.c-pink { color: #df5a83; }
.c-violet { color: #7d45ea; }
.c-cyan { color: #2397b5; }
.c-rose { color: #dda8f3; }
.c-lilac { color: #b5a2f7; }
.c-purple { color: #8a42f0; }

/* Панель задач */
.taskbar {
    position: relative;
    display: flex;
    align-items: center;
    justify-content: center;
    height: 24px;
    background: linear-gradient(90deg, #1f1c2c, #251c2b 35%, #331a20 55%, #401915 80%, #2c1b1f);
}
.apps {
    display: flex;
    gap: 8px;
}
.apps svg {
    width: 14px;
    height: 20px;
    padding: 2px 0;
    border-bottom: 1px solid transparent;
}
.apps .run {
    border-image: linear-gradient(90deg, transparent 38%, #a79da0 38%, #a79da0 62%, transparent 62%) 1;
}
.apps .focus {
    border-bottom: 1px solid #ddd;
    background-color: rgba(255, 255, 255, 0.08);
}
.tray {
    position: absolute;
    right: 9px;
    top: 0;
    display: flex;
    align-items: center;
    gap: 9px;
    height: 24px;
    color: #ddd;
    font-family: Roboto, "Noto Sans", sans-serif;
    font-size: 6px;
    line-height: 8px;
}
.devices {
    display: flex;
    gap: 4px;
}
.tray time {
    text-align: right;
}
.party {
    position: absolute;
    left: 61.4%;
    bottom: 7px;
    display: flex;
    align-items: center;
    justify-content: flex-end;
    gap: 3px;
    width: 125px;
    height: 16px;
    padding-right: 4px;
    border: 2px solid #fff;
    border-radius: 6px;
    background-color: #35332f;
    font-size: 6px;
    font-weight: 900;
}
.party strong {
    position: absolute;
    left: 22px;
    top: -6px;
    color: #ee8a3a;
    font-size: 7px;
    font-style: italic;
    font-weight: 900;
    text-shadow: 1px 0 #fff, -1px 0 #fff, 0 1px #fff, 0 -1px #fff;
}
.party i {
    width: 7px;
    height: 7px;
    border: 2px solid #ccc;
    border-radius: 50%;
}
.doge {
    position: absolute;
    left: 0;
    bottom: 0;
    width: 20px;
    height: 18px;
}
```
